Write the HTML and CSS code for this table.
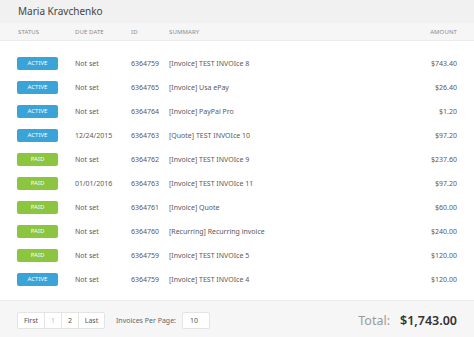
FILE: index.html
```html
<!DOCTYPE html>
<html>
<head>
<meta charset="utf-8">
<link rel="stylesheet" href="styles.css">
</head>
<body>
<div class="panel">
  <div class="title">Maria Kravchenko</div>
  <div class="row head">
    <div>STATUS</div><div>DUE DATE</div><div>ID</div><div>SUMMARY</div><div class="amt">AMOUNT</div>
  </div>
  <div class="body">
    <div class="row"><div><span class="badge active">ACTIVE</span></div><div>Not set</div><div>6364759</div><div>[Invoice] TEST INVOIce 8</div><div class="amt">$743.40</div></div>
    <div class="row"><div><span class="badge active">ACTIVE</span></div><div>Not set</div><div>6364765</div><div>[Invoice] Usa ePay</div><div class="amt">$26.40</div></div>
    <div class="row"><div><span class="badge active">ACTIVE</span></div><div>Not set</div><div>6364764</div><div>[Invoice] PayPal Pro</div><div class="amt">$1.20</div></div>
    <div class="row"><div><span class="badge active">ACTIVE</span></div><div>12/24/2015</div><div>6364763</div><div>[Quote] TEST INVOIce 10</div><div class="amt">$97.20</div></div>
    <div class="row"><div><span class="badge paid">PAID</span></div><div>Not set</div><div>6364762</div><div>[Invoice] TEST INVOIce 9</div><div class="amt">$237.60</div></div>
    <div class="row"><div><span class="badge paid">PAID</span></div><div>01/01/2016</div><div>6364763</div><div>[Invoice] TEST INVOIce 11</div><div class="amt">$97.20</div></div>
    <div class="row"><div><span class="badge paid">PAID</span></div><div>Not set</div><div>6364761</div><div>[Invoice] Quote</div><div class="amt">$60.00</div></div>
    <div class="row"><div><span class="badge paid">PAID</span></div><div>Not set</div><div>6364760</div><div>[Recurring] Recurring invoice</div><div class="amt">$240.00</div></div>
    <div class="row"><div><span class="badge paid">PAID</span></div><div>Not set</div><div>6364759</div><div>[Invoice] TEST INVOIce 5</div><div class="amt">$120.00</div></div>
    <div class="row"><div><span class="badge active">ACTIVE</span></div><div>Not set</div><div>6364759</div><div>[Invoice] TEST INVOIce 4</div><div class="amt">$120.00</div></div>
  </div>
  <div class="footer">
    <div class="pager">
      <span class="pg first">First</span><span class="pg dim">1</span><span class="pg">2</span><span class="pg">Last</span>
    </div>
    <span class="ppl">Invoices Per Page:</span>
    <span class="ppi">10</span>
    <div class="total"><span class="tl">Total:</span><span class="tv">$1,743.00</span></div>
  </div>
</div>
</body>
</html>
```
FILE: styles.css
```css
html, body { margin: 0; padding: 0; background: #fff; }
body { font-family: "Noto Sans", "DejaVu Sans", sans-serif; color: #555; width: 474px; height: 337px; overflow: hidden; }
.panel { display: flex; flex-direction: column; height: 337px; }
.title { height: 23px; background: #f1f1f1; padding-left: 18px; font-size: 10px; color: #444; line-height: 23px; box-sizing: border-box; }
.row { display: grid; grid-template-columns: 57px 56px 38px 1fr 80px; padding: 0 17px 0 18px; align-items: center; font-size: 7px; }
.head { height: 17px; background: #f6f6f6; color: #8a8a8a; font-size: 6px; border-bottom: 1px solid #ececec; letter-spacing: 0.1px; }
.body { padding-top: 10px; }
.body .row { height: 24px; color: #5a5a5a; }
.amt { text-align: right; }
.badge { display: inline-block; width: 41px; height: 13px; line-height: 13px; text-align: center; color: #fff; font-size: 6px; border-radius: 2px; margin-left: -1px; }
.active { background: #3aa3d8; }
.paid { background: #8cc540; }
.footer { margin-top: auto; height: 37px; background: #f6f6f6; border-top: 1px solid #ebebeb; box-sizing: border-box; display: flex; align-items: center; padding: 0 17px 0 17px; font-size: 7px; }
.pager { display: flex; height: 17px; border: 1px solid #e4e4e4; background: #fff; box-sizing: border-box; border-radius: 2px; margin-top: 3px; }
.pg { display: flex; align-items: center; justify-content: center; width: 16px; border-left: 1px solid #e4e4e4; color: #555; }
.pg.first { width: 26px; }
.pg:last-child { width: 25px; }
.pg:first-child { border-left: none; }
.pg.dim { color: #bbb; }
.ppl { margin-left: 11px; margin-top: 3px; color: #666; }
.ppi { margin-left: 6px; margin-top: 3px; width: 28px; height: 17px; box-sizing: border-box; border: 1px solid #e4e4e4; background: #fff; display: flex; align-items: center; padding-left: 7px; color: #555; border-radius: 2px; }
.total { margin-left: auto; display: flex; align-items: baseline; margin-top: 3px; }
.tl { color: #9a9a9a; font-size: 12.5px; }
.tv { color: #333; font-size: 12.5px; font-weight: 600; margin-left: 10px; }
```
